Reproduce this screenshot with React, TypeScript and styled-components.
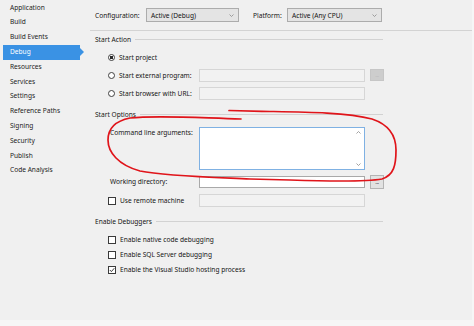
import React from "react";
import styled, { createGlobalStyle } from "styled-components";

const Global = createGlobalStyle`
  html, body { margin: 0; padding: 0; background: #f6f6f6; }
  body {
    font-family: "Noto Sans", "DejaVu Sans", sans-serif;
    font-size: 6.6px;
    color: #141414;
  }
`;

const Page = styled.div`
  position: relative;
  width: 472px;
  height: 320px;
  display: flex;
  background: #f0f0f0;
  overflow: hidden;
`;

const Sidebar = styled.nav`
  width: 88px;
  flex: none;
  box-sizing: border-box;
  padding: 0.6px 0 0 3px;
  display: flex;
  flex-direction: column;
`;

const NavItem = styled.div<{ $active?: boolean }>`
  position: relative;
  width: 77px;
  height: 14.8px;
  line-height: 14.8px;
  padding-left: 7px;
  box-sizing: border-box;
  white-space: nowrap;
  background: ${(p) => (p.$active ? "#3a92e4" : "transparent")};
  color: ${(p) => (p.$active ? "#ffffff" : "#1c1c1c")};
  &::after {
    content: "";
    display: ${(p) => (p.$active ? "block" : "none")};
    position: absolute;
    right: -4px;
    top: 3.4px;
    border-top: 4px solid transparent;
    border-bottom: 4px solid transparent;
    border-left: 4px solid #3a92e4;
  }
`;

const Main = styled.main`
  flex: 1;
  display: flex;
  flex-direction: column;
`;

const Header = styled.div`
  height: 30px;
  margin-left: 2px;
  padding-left: 5px;
  border-bottom: 1px solid #d3d3d3;
  display: grid;
  grid-template-columns: 51px 93px 14px 34px 95px;
  align-items: center;
`;

const HeaderLabel = styled.span``;

const Select = styled.div`
  height: 14px;
  box-sizing: border-box;
  border: 1px solid #acacac;
  background: #e4e4e4;
  display: flex;
  align-items: center;
  justify-content: space-between;
  padding: 0 4px 0 4px;
  color: #111111;
`;

const SectionTitle = styled.div<{ $top: number }>`
  margin-top: ${(p) => p.$top}px;
  height: 14px;
  padding: 0 89px 0 7px;
  display: flex;
  align-items: center;
  gap: 4px;
`;

const Rule = styled.div`
  flex: 1;
  height: 1px;
  background: #d2d2d2;
`;

const Row = styled.div<{ $top?: number; $h: number; $align?: string }>`
  margin-top: ${(p) => p.$top ?? 0}px;
  height: ${(p) => p.$h}px;
  padding-left: 20px;
  display: grid;
  grid-template-columns: 91px 166px 14px;
  column-gap: 0;
  align-items: ${(p) => p.$align ?? "center"};
  & > :nth-child(3) { margin-left: 5px; }
`;

const Choice = styled.label`
  display: flex;
  align-items: center;
  gap: 4px;
  white-space: nowrap;
`;

const Label = styled.span<{ $lh?: number }>`
  white-space: nowrap;
  line-height: ${(p) => p.$lh ?? 12}px;
`;

const LabelIndent = styled(Label)`
  padding-left: 2px;
`;

const Radio = styled.span<{ $checked?: boolean }>`
  width: 7px;
  height: 7px;
  box-sizing: border-box;
  border-radius: 50%;
  border: 1px solid #404040;
  flex: none;
  background: ${(p) =>
    p.$checked
      ? "radial-gradient(circle, #2a2a2a 0 1.5px, #ffffff 1.9px)"
      : "#ffffff"};
`;

const Box = styled.span`
  width: 8px;
  height: 8px;
  box-sizing: border-box;
  border: 1px solid #3a3a3a;
  background: #ffffff;
  flex: none;
  display: flex;
  align-items: center;
  justify-content: center;
`;

const Field = styled.div<{ $enabled?: boolean; $h: number }>`
  height: ${(p) => p.$h}px;
  box-sizing: border-box;
  border: 1px solid ${(p) => (p.$enabled ? "#a9a9a9" : "#d6d6d6")};
  background: ${(p) => (p.$enabled ? "#ffffff" : "#f2f2f2")};
`;

const TextArea = styled.div`
  height: 43px;
  box-sizing: border-box;
  border: 1px solid #7fb1e3;
  background: #ffffff;
  display: flex;
  flex-direction: column;
  align-items: flex-end;
  justify-content: space-between;
  padding: 3px 3px 3px 0;
`;

const Browse = styled.div<{ $enabled?: boolean }>`
  width: 14px;
  height: ${(p) => (p.$enabled ? 14 : 12)}px;
  box-sizing: border-box;
  border: 1px solid ${(p) => (p.$enabled ? "#b4b4b4" : "#c6c6c6")};
  background: ${(p) => (p.$enabled ? "#e2e2e2" : "#cdcdcd")};
  color: ${(p) => (p.$enabled ? "#333" : "#b9b9b9")};
  display: flex;
  align-items: center;
  justify-content: center;
  font-size: 6px;
  line-height: 1;
  letter-spacing: -0.5px;
`;

const Overlay = styled.svg`
  position: absolute;
  left: 0;
  top: 0;
  pointer-events: none;
`;

const Chevron = ({ up }: { up?: boolean }) => (
  <svg width="5" height="3" viewBox="0 0 5 3">
    <path
      d={up ? "M0.5 2.5 L2.5 0.5 L4.5 2.5" : "M0.5 0.5 L2.5 2.5 L4.5 0.5"}
      fill="none"
      stroke="#8a8a8a"
      strokeWidth="0.8"
    />
  </svg>
);

const navItems = [
  "Application",
  "Build",
  "Build Events",
  "Debug",
  "Resources",
  "Services",
  "Settings",
  "Reference Paths",
  "Signing",
  "Security",
  "Publish",
  "Code Analysis",
];

export default function App() {
  return (
    <>
      <Global />
      <Page>
        <Sidebar>
          {navItems.map((n) => (
            <NavItem key={n} $active={n === "Debug"}>
              {n}
            </NavItem>
          ))}
        </Sidebar>
        <Main>
          <Header>
            <HeaderLabel>Configuration:</HeaderLabel>
            <Select>
              <span>Active (Debug)</span>
              <Chevron />
            </Select>
            <span />
            <HeaderLabel>Platform:</HeaderLabel>
            <Select>
              <span>Active (Any CPU)</span>
              <Chevron />
            </Select>
          </Header>

          <SectionTitle $top={1}>
            <span>Start Action</span>
            <Rule />
          </SectionTitle>
          <Row $top={2} $h={18}>
            <Choice>
              <Radio $checked />
              <span>Start project</span>
            </Choice>
          </Row>
          <Row $h={18}>
            <Choice>
              <Radio />
              <span>Start external program:</span>
            </Choice>
            <Field $h={13} />
            <Browse>...</Browse>
          </Row>
          <Row $h={18}>
            <Choice>
              <Radio />
              <span>Start browser with URL:</span>
            </Choice>
            <Field $h={13} />
          </Row>

          <SectionTitle $top={5}>
            <span>Start Options</span>
            <Rule />
          </SectionTitle>
          <Row $top={6} $h={43} $align="start">
            <LabelIndent $lh={11}>Command line arguments:</LabelIndent>
            <TextArea>
              <Chevron up />
              <Chevron />
            </TextArea>
          </Row>
          <Row $top={4} $h={16}>
            <LabelIndent>Working directory:</LabelIndent>
            <Field $enabled $h={12} />
            <Browse $enabled>...</Browse>
          </Row>
          <Row $top={4} $h={13}>
            <Choice>
              <Box />
              <span>Use remote machine</span>
            </Choice>
            <Field $h={13} />
          </Row>

          <SectionTitle $top={7}>
            <span>Enable Debuggers</span>
            <Rule />
          </SectionTitle>
          <Row $top={4} $h={15}>
            <Choice>
              <Box />
              <span>Enable native code debugging</span>
            </Choice>
          </Row>
          <Row $h={15}>
            <Choice>
              <Box />
              <span>Enable SQL Server debugging</span>
            </Choice>
          </Row>
          <Row $h={15}>
            <Choice>
              <Box>
                <svg width="6" height="6" viewBox="0 0 6 6">
                  <path d="M0.8 3 L2.4 4.6 L5.3 1.2" fill="none" stroke="#2a2a2a" strokeWidth="0.9" />
                </svg>
              </Box>
              <span>Enable the Visual Studio hosting process</span>
            </Choice>
          </Row>
        </Main>
        <Overlay width="472" height="320" viewBox="0 0 472 320">
          <path
            d="M229 110.5 L262 111.3 C300 112 345 112 372 119 C390 125 396 136 396 150 C396 165 394 175 382 179 C365 182 320 181 290 180 L250 179 C205 177 165 176 140 171 C118 165 108 152 108 140 C108 128 115 121 130 118 C158 115 200 118 241 119"
            fill="none"
            stroke="#e0141a"
            strokeWidth="1.7"
            strokeLinecap="round"
            strokeLinejoin="round"
          />
        </Overlay>
      </Page>
    </>
  );
}
